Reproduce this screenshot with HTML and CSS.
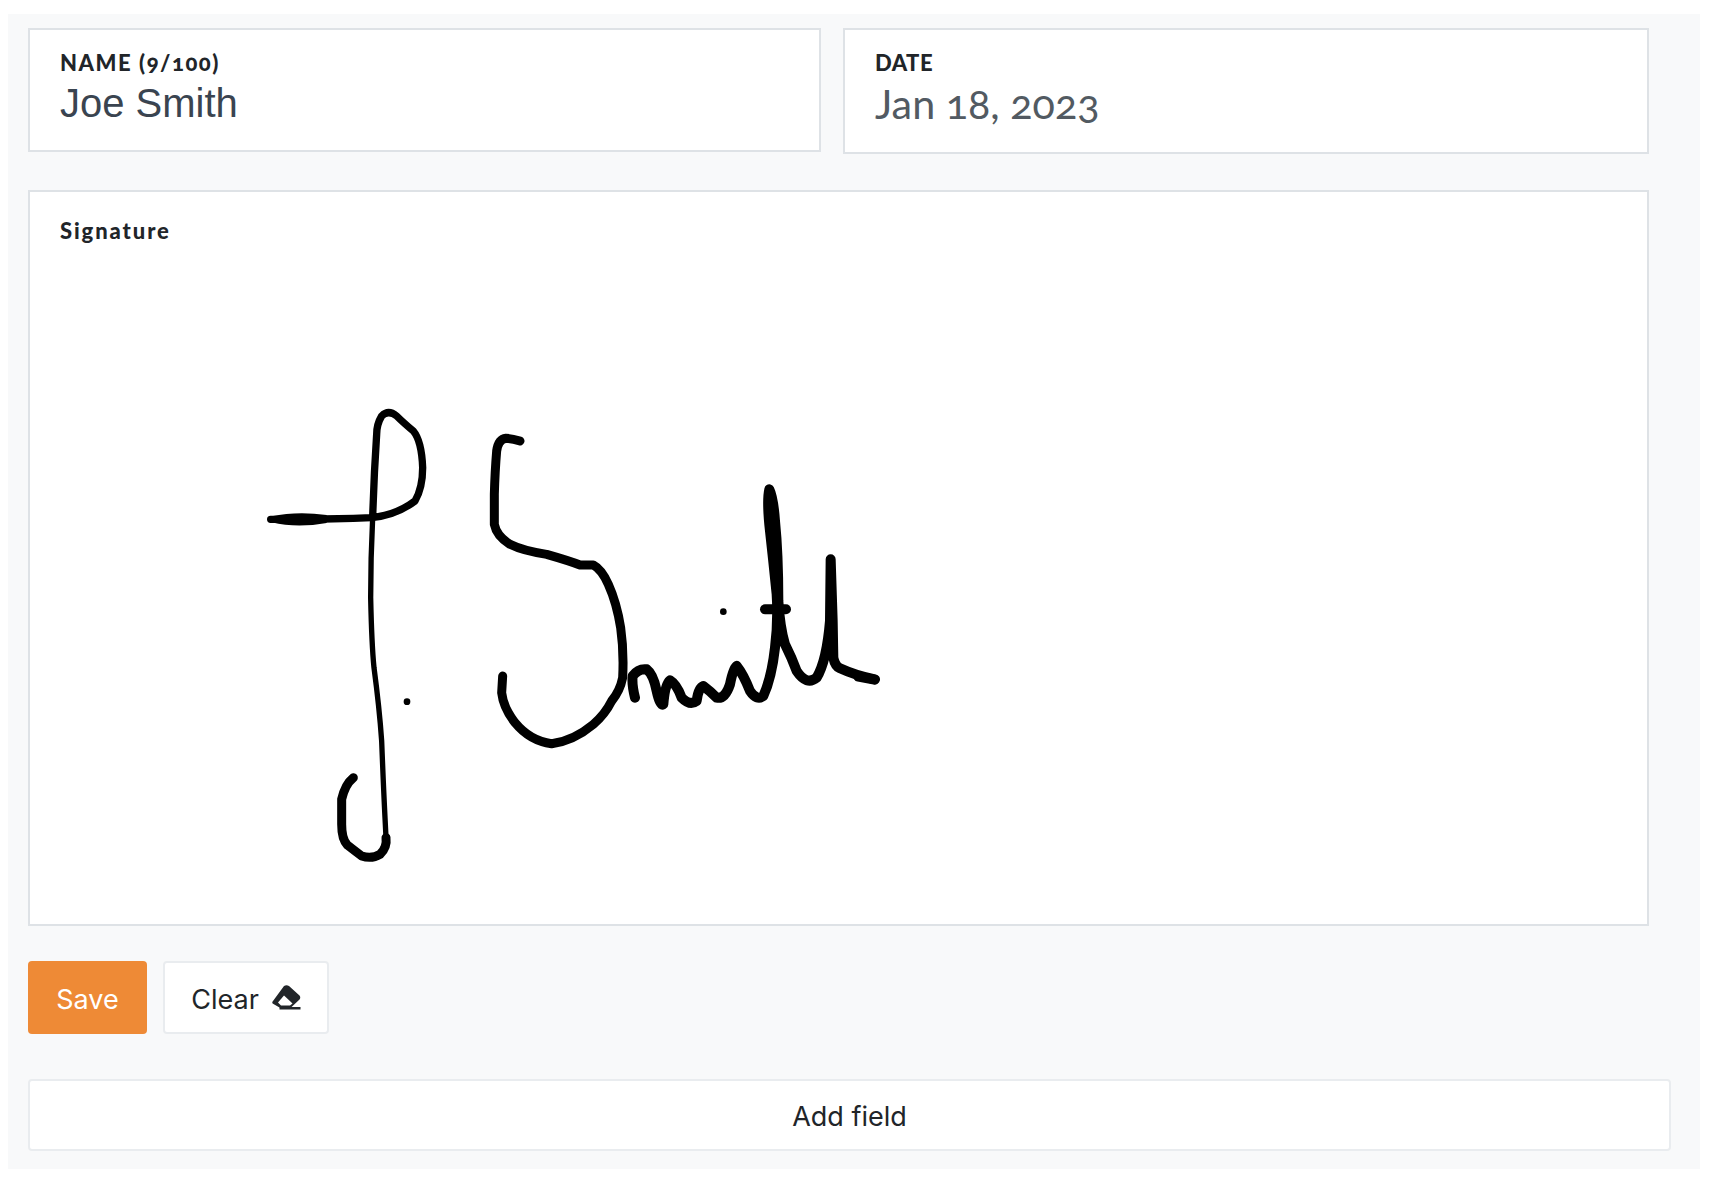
FILE: index.html
```html
<!DOCTYPE html>
<html lang="en">
<head>
<meta charset="utf-8">
<title>Signature form</title>
<link rel="stylesheet" href="styles.css">
</head>
<body>
<main class="panel">
  <div class="fields">
    <section class="field field-name">
      <label class="field-label">NAME (9/100)</label>
      <div class="name-value">Joe Smith</div>
    </section>
    <section class="field field-date">
      <label class="field-label">DATE</label>
      <div class="date-value">Jan 18, 2023</div>
    </section>
  </div>
  <section class="signature">
    <div class="sig-label">Signature</div>
    <svg class="sig-canvas" viewBox="30 251 1618 674" aria-label="Handwritten signature">
      <g class="ink" transform="translate(240 390) scale(.33333)">
        <path class="w13" d="M92 385 L150 385 L250 384 L340 382 L395 380 Q470 372 525 330 Q548 290 548 230 Q545 150 520 120 Q490 95 470 75 Q445 55 425 75 Q410 100 410 130 Q402 250 398 380"/>
        <path class="blob" d="M95 376 Q170 360 260 372 L260 396 Q170 412 95 394z"/>
        <path class="w11" d="M398 380 Q392 500 392 620 Q395 760 402 830 Q418 950 425 1050 Q430 1180 435 1280 L438 1340"/>
        <path class="w16" d="M438 1340 Q442 1370 420 1390 Q395 1405 365 1395 Q345 1380 322 1362 Q305 1345 305 1300 L305 1225 Q315 1180 340 1160"/>
        <circle cx="501" cy="932" r="10"/>
      </g>
      <g class="ink" transform="translate(480 420) scale(.33333)">
        <path class="w16" d="M120 60 Q95 52 78 52 Q55 55 50 90 Q45 150 43 220 L43 310 Q50 345 90 370 Q130 390 200 400 Q270 420 300 432 L340 432 Q365 445 385 490 Q410 545 422 620 Q432 690 428 770 Q420 810 395 840 Q375 880 340 910 Q280 960 215 968 Q150 960 105 905 Q70 860 65 815 L68 765"/>
        <path class="w18" d="M465 830 Q455 790 458 765 Q475 742 500 745 Q520 760 530 810 Q540 855 550 850 Q555 790 570 778 Q590 790 605 830 Q630 855 650 840 Q655 800 670 795 Q690 810 710 830 Q735 835 750 790 Q760 740 770 735 Q790 760 810 810 Q830 840 850 825 Q875 770 885 680 Q895 600 890 520 Q880 420 870 330 Q860 240 868 205 Q880 230 885 300 Q895 400 895 540 Q900 620 915 670 Q935 710 950 750 Q980 795 1010 770 Q1040 720 1050 600 L1052 415 L1058 600 L1060 710 Q1065 735 1080 742 Q1130 765 1185 775"/>
        <path class="w18" d="M855 565 L918 565"/>
        <path class="w18" d="M1135 767 L1183 776"/>
        <circle cx="730" cy="572" r="10"/>
      </g>
    </svg>
  </section>
  <div class="actions">
    <button class="btn btn-save" type="button"><span class="btn-text">Save</span></button>
    <button class="btn btn-clear" type="button"><span class="btn-text">Clear</span>
      <svg class="eraser" viewBox="0 0 29 25" aria-hidden="true"><path d="M12 1Q14.500 -.5 17 1L27.500 10.500Q29 12.500 27.500 14.500L19 22.500H7.500L1 18.800Q-.5 17.500 1 16z"/><path class="eraser-cut" d="M12 10.500 20.500 18.500 18 20.500H9L6 17.500z"/><rect x="7.500" y="22" width="21" height="2.500"/></svg>
    </button>
  </div>
  <button class="add-field" type="button"><span class="btn-text">Add field</span></button>
</main>
</body>
</html>
```
FILE: styles.css
```css
* { box-sizing: border-box; }
html, body { margin: 0; background: #fff; }
body { padding: 14px 12px 11px 8px; font-family: Inter, "Liberation Sans", sans-serif; }
.panel { background: #f8f9fa; height: 1155px; padding: 14px 29px 18px 20px; }
.fields { display: flex; gap: 22px; align-items: flex-start; margin-right: 22px; }
.field { background: #fff; border: 2px solid #dee2e6; padding: 21px 30px 0; }
.field-name { width: 793px; height: 124px; }
.field-date { width: 806px; height: 126px; }
.field-label { display: block; font: 900 22px/24px Lato, sans-serif; color: #212529; font-feature-settings: "onum"; letter-spacing: 1.550px; }
.field-date .field-label { letter-spacing: .5px; }
.name-value { font: 400 40px/44px "Liberation Sans", Arial, sans-serif; color: #3a4450; margin-top: 6px; }
.date-value { font: 400 41.300px/48px Lato, sans-serif; color: #525a62; font-feature-settings: "onum"; margin-top: 4px; }
.signature { background: #fff; border: 2px solid #dee2e6; width: 1621px; height: 736px; margin-top: 36px; padding: 27px 30px 0; }
.sig-label { font: 900 22px/24px Lato, sans-serif; color: #212529; letter-spacing: 1.900px; }
.sig-canvas { display: block; width: 1618px; height: 674px; margin: 9px 0 0 -30px; }
.ink path { fill: none; stroke: #000; stroke-linecap: round; stroke-linejoin: round; }
.ink .blob { fill: #000; stroke: none; }
.ink circle { fill: #000; }
.w11 { stroke-width: 16; } .w13 { stroke-width: 22; } .w16 { stroke-width: 27; } .w18 { stroke-width: 30; }
.actions { display: flex; gap: 16px; margin-top: 35px; }
.btn { height: 73px; border-radius: 4px; font: 400 27px/1 Inter, sans-serif; display: inline-flex; align-items: center; justify-content: center; padding: 0; }
.btn-text { position: relative; top: 2px; }
.btn-save { width: 119px; background: #ee8a36; border: 0; color: #fff; }
.btn-clear { width: 166px; background: #fff; border: 2px solid #e9ecef; color: #212529; gap: 13px; }
.eraser { width: 29px; height: 25px; fill: #212529; }
.eraser-cut { fill: #fff; }
.add-field { display: block; width: 1643px; height: 72px; margin-top: 45px; background: #fff; border: 2px solid #e9ecef; border-radius: 4px; font: 400 27px/1 Inter, sans-serif; color: #212529; }
.add-field .btn-text { top: 1px; }
```
